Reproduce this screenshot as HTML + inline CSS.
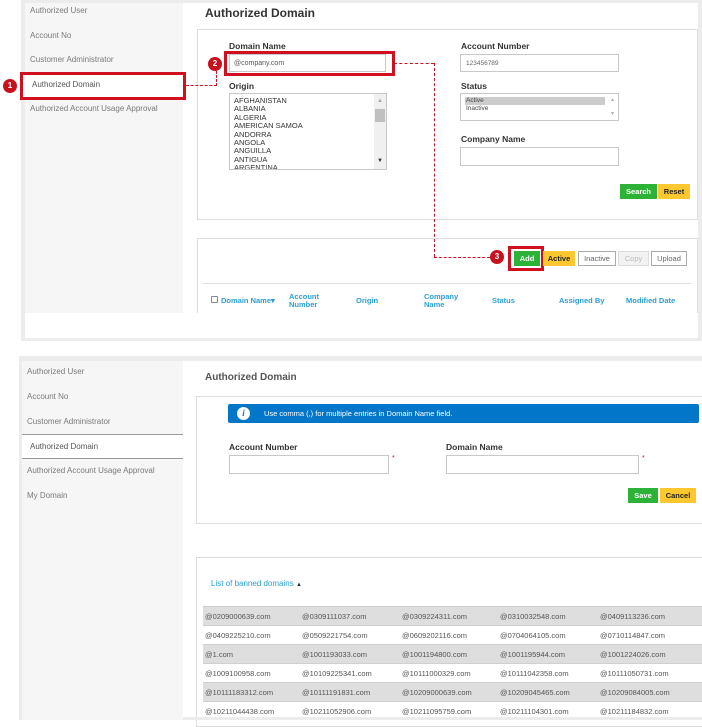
<!DOCTYPE html>
<html><head><meta charset="utf-8"><style>
*{margin:0;padding:0;box-sizing:border-box}
body{width:702px;height:720px;background:#fff;position:relative;overflow:hidden;font-family:"Liberation Sans",Arial,sans-serif}
.a{position:absolute;white-space:nowrap}
.side{color:#7a7a7a;font-size:8px}
.lbl{font-weight:bold;font-size:8.5px;color:#333}
.inp{position:absolute;border:1px solid #c8c8c8;background:#fff}
.btn{position:absolute;font-size:7.5px;font-weight:bold;text-align:center;line-height:15px}
.hd{position:absolute;color:#2a9fd6;font-size:7.5px;font-weight:bold;line-height:8px}
.badge{position:absolute;width:14px;height:14px;border-radius:50%;background:#c8101e;color:#fff;font-size:8px;font-weight:bold;text-align:center;line-height:14px}
.lst{font-size:7.5px;color:#333;line-height:8.4px}
.row{position:absolute;left:203px;width:499px;height:19px;border-top:1px solid #d0d0d0;font-size:7.5px;color:#555}
.row span{position:absolute;top:5px}
</style></head><body>
<!-- TOP FRAME -->
<div class="a" style="left:21px;top:0;width:681px;height:341px;background:#ececec"></div>
<div class="a" style="left:25px;top:3px;width:673px;height:335px;background:#fff"></div>
<div class="a" style="left:25px;top:3px;width:158px;height:310px;background:#f6f6f6"></div>
<div class="a side" style="left:30px;top:6px">Authorized User</div>
<div class="a side" style="left:30px;top:31px">Account No</div>
<div class="a side" style="left:30px;top:55px">Customer Administrator</div>
<div class="a" style="left:20px;top:72px;width:166px;height:28px;border:3px solid #d0101e;background:#fff"></div>
<div class="a side" style="left:32px;top:80px;color:#555">Authorized Domain</div>
<div class="a side" style="left:30px;top:104px">Authorized Account Usage Approval</div>
<div class="badge" style="left:3px;top:79px">1</div>
<div class="a" style="left:205px;top:6px;font-size:12px;font-weight:bold;color:#333">Authorized Domain</div>
<div class="a" style="left:197px;top:29px;width:501px;height:191px;border:1px solid #ddd"></div>
<div class="a lbl" style="left:229px;top:41px">Domain Name</div>
<div class="a" style="left:224px;top:51px;width:171px;height:25px;border:3px solid #d0101e"></div>
<div class="inp" style="left:229px;top:54px;width:157px;height:18px"></div>
<div class="a" style="left:234px;top:60px;font-size:7px;color:#555">@company.com</div>
<div class="badge" style="left:208px;top:57px">2</div>
<div class="a" style="left:186px;top:85px;width:31px;border-top:1px dashed #d0101e"></div>
<div class="a" style="left:216px;top:71px;height:15px;border-left:1px dashed #d0101e"></div>
<div class="a lbl" style="left:229px;top:81px">Origin</div>
<div class="inp" style="left:229px;top:93px;width:158px;height:77px;overflow:hidden">
<div class="lst" style="position:absolute;left:4px;top:3px">AFGHANISTAN<br>ALBANIA<br>ALGERIA<br>AMERICAN SAMOA<br>ANDORRA<br>ANGOLA<br>ANGUILLA<br>ANTIGUA<br>ARGENTINA</div>
<div style="position:absolute;right:0;top:0;width:12px;height:75px;background:#f0f0f0"></div>
<div style="position:absolute;right:1px;top:15px;width:10px;height:13px;background:#c0c0c0"></div>
<div style="position:absolute;right:3px;top:4px;font-size:6px;color:#aaa">▲</div>
<div style="position:absolute;right:3px;top:64px;font-size:6px;color:#333">▼</div>
</div>
<div class="a" style="left:394px;top:63px;width:40px;border-top:1px dashed #d0101e"></div>
<div class="a" style="left:434px;top:63px;height:194px;border-left:1px dashed #d0101e"></div>
<div class="a" style="left:434px;top:257px;width:56px;border-top:1px dashed #d0101e"></div>
<div class="a lbl" style="left:461px;top:41px">Account Number</div>
<div class="inp" style="left:460px;top:54px;width:159px;height:18px"></div>
<div class="a" style="left:466px;top:60px;font-size:6.5px;color:#666">123456789</div>
<div class="a lbl" style="left:461px;top:81px">Status</div>
<div class="inp" style="left:460px;top:93px;width:159px;height:28px">
<div style="position:absolute;left:4px;top:3px;width:140px;height:8px;background:#ccc"></div>
<div class="lst" style="position:absolute;left:5px;top:3px;font-size:6.5px;color:#444">Active<br>Inactive</div>
<div style="position:absolute;right:3px;top:3px;font-size:5px;color:#aaa">▲</div>
<div style="position:absolute;right:3px;top:17px;font-size:5px;color:#aaa">▼</div>
</div>
<div class="a lbl" style="left:461px;top:134px">Company Name</div>
<div class="inp" style="left:460px;top:147px;width:159px;height:19px"></div>
<div class="btn" style="left:620px;top:184px;width:37px;background:#2db238;color:#fff">Search</div>
<div class="btn" style="left:658px;top:184px;width:32px;background:#fdc82f;color:#222">Reset</div>
<div class="a" style="left:197px;top:238px;width:501px;height:80px;border:1px solid #ddd;border-bottom:none"></div>
<div class="a" style="left:183px;top:313px;width:515px;height:25px;background:#fff"></div>
<div class="badge" style="left:490px;top:250px">3</div>
<div class="a" style="left:508px;top:246px;width:36px;height:25px;border:3px solid #d0101e"></div>
<div class="btn" style="left:514px;top:251px;width:26px;background:#2db238;color:#fff">Add</div>
<div class="btn" style="left:543px;top:251px;width:32px;background:#fdc82f;color:#222">Active</div>
<div class="btn" style="left:578px;top:251px;width:38px;border:1px solid #aaa;line-height:13px;color:#666;font-weight:normal">Inactive</div>
<div class="btn" style="left:618px;top:251px;width:31px;border:1px solid #ddd;line-height:13px;color:#bbb;background:#f2f2f2;font-weight:normal">Copy</div>
<div class="btn" style="left:651px;top:251px;width:36px;border:1px solid #aaa;line-height:13px;color:#666;font-weight:normal">Upload</div>
<div class="a" style="left:203px;top:283px;width:488px;border-top:1px solid #ddd"></div>
<div class="a" style="left:211px;top:296px;width:7px;height:7px;border:1px solid #888;border-radius:1px"></div>
<div class="hd" style="left:221px;top:297px">Domain Name▾</div>
<div class="hd" style="left:289px;top:293px">Account<br>Number</div>
<div class="hd" style="left:356px;top:297px">Origin</div>
<div class="hd" style="left:424px;top:293px">Company<br>Name</div>
<div class="hd" style="left:492px;top:297px">Status</div>
<div class="hd" style="left:559px;top:297px">Assigned By</div>
<div class="hd" style="left:626px;top:297px">Modified Date</div>

<!-- BOTTOM FRAME -->
<div class="a" style="left:19px;top:356px;width:683px;height:364px;background:#ececec"></div>
<div class="a" style="left:22px;top:361px;width:680px;height:356px;background:#fff"></div>
<div class="a" style="left:22px;top:361px;width:161px;height:359px;background:#f6f6f6"></div>
<div class="a side" style="left:27px;top:367px">Authorized User</div>
<div class="a side" style="left:27px;top:392px">Account No</div>
<div class="a side" style="left:27px;top:417px">Customer Administrator</div>
<div class="a" style="left:22px;top:434px;width:161px;height:25px;background:#fff;border-top:1px solid #999;border-bottom:1px solid #999"></div>
<div class="a side" style="left:30px;top:442px;color:#555">Authorized Domain</div>
<div class="a side" style="left:27px;top:466px">Authorized Account Usage Approval</div>
<div class="a side" style="left:27px;top:491px">My Domain</div>
<div class="a" style="left:205px;top:372px;font-size:10px;font-weight:bold;color:#555">Authorized Domain</div>
<div class="a" style="left:196px;top:396px;width:508px;height:128px;border:1px solid #ddd"></div>
<div class="a" style="left:228px;top:404px;width:471px;height:19px;background:#0277c9;border-radius:2px"></div>
<div class="a" style="left:237px;top:407px;width:13px;height:13px;border-radius:50%;background:#fff;color:#0277c9;font:italic bold 9px 'Liberation Serif',serif;text-align:center;line-height:13px">i</div>
<div class="a" style="left:264px;top:409px;font-size:7.5px;color:#fff">Use comma (,) for multiple entries in Domain Name field.</div>
<div class="a lbl" style="left:229px;top:442px">Account Number</div>
<div class="inp" style="left:229px;top:455px;width:160px;height:19px"></div>
<div class="a" style="left:392px;top:455px;font-size:7px;color:#d0101e">*</div>
<div class="a lbl" style="left:446px;top:442px">Domain Name</div>
<div class="inp" style="left:446px;top:455px;width:193px;height:19px"></div>
<div class="a" style="left:642px;top:455px;font-size:7px;color:#d0101e">*</div>
<div class="btn" style="left:628px;top:488px;width:30px;background:#2db238;color:#fff">Save</div>
<div class="btn" style="left:660px;top:488px;width:36px;background:#fdc82f;color:#222">Cancel</div>
<div class="a" style="left:196px;top:557px;width:508px;height:170px;border:1px solid #ddd"></div>
<div class="a" style="left:211px;top:579px;font-size:8px;color:#2a9fd6">List of banned domains <span style="font-size:6px;color:#333">▲</span></div>
<div class="row" style="top:606px;background:#dedede"><span style="left:2px">@0209000639.com</span><span style="left:99px">@0309111037.com</span><span style="left:199px">@0309224311.com</span><span style="left:297px">@0310032548.com</span><span style="left:397px">@0409113236.com</span></div>
<div class="row" style="top:625px"><span style="left:2px">@0409225210.com</span><span style="left:99px">@0509221754.com</span><span style="left:199px">@0609202116.com</span><span style="left:297px">@0704064105.com</span><span style="left:397px">@0710114847.com</span></div>
<div class="row" style="top:644px;background:#dedede"><span style="left:2px">@1.com</span><span style="left:99px">@1001193033.com</span><span style="left:199px">@1001194800.com</span><span style="left:297px">@1001195944.com</span><span style="left:397px">@1001224026.com</span></div>
<div class="row" style="top:663px"><span style="left:2px">@1009100958.com</span><span style="left:99px">@10109225341.com</span><span style="left:199px">@10111000329.com</span><span style="left:297px">@10111042358.com</span><span style="left:397px">@10111050731.com</span></div>
<div class="row" style="top:682px;background:#dedede"><span style="left:2px">@10111183312.com</span><span style="left:99px">@10111191831.com</span><span style="left:199px">@10209000639.com</span><span style="left:297px">@10209045465.com</span><span style="left:397px">@10209084005.com</span></div>
<div class="row" style="top:701px"><span style="left:2px">@10211044438.com</span><span style="left:99px">@10211052906.com</span><span style="left:199px">@10211095759.com</span><span style="left:297px">@10211104301.com</span><span style="left:397px">@10211184832.com</span></div>
<div class="a" style="left:183px;top:717px;width:519px;height:3px;background:#ececec"></div>
</body></html>
